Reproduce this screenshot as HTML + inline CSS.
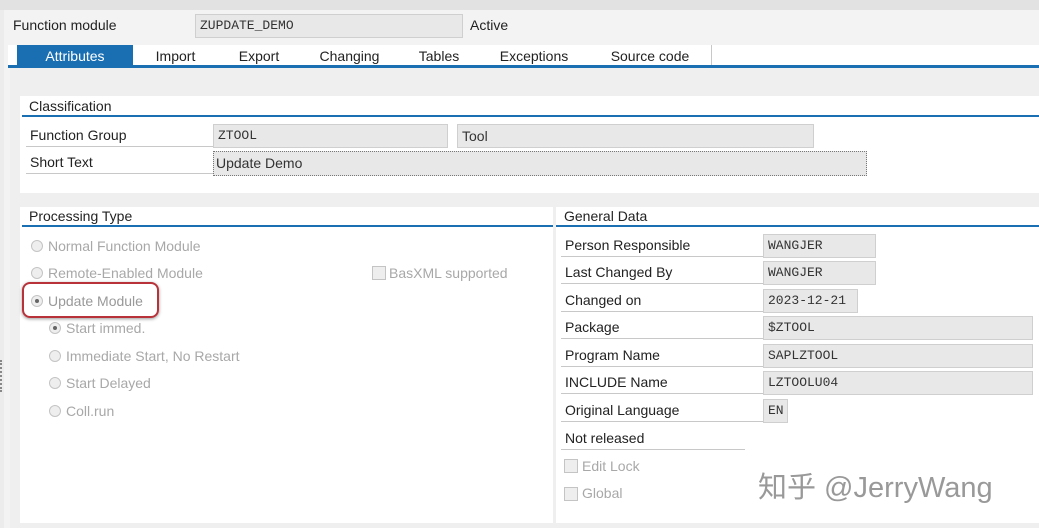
<!DOCTYPE html>
<html><head><meta charset="utf-8"><style>
body{margin:0;width:1039px;height:528px;background:#ececec;position:relative;overflow:hidden;font-family:"Liberation Sans",sans-serif;font-size:14px;color:#222}
.a{position:absolute;white-space:nowrap}
.f{position:absolute;background:#e8e8e8;border:1px solid #cfcfcf;box-sizing:border-box;font-family:"Liberation Mono",monospace;font-size:13px;padding:3px 0 0 4px;color:#333}
.tab{position:absolute;top:45px;height:21px;background:#fff;border-right:1px solid #c8c8c8;text-align:center;line-height:22px;font-size:14px}
.lbl{position:absolute;border-bottom:1px solid #c8c8c8;height:23px;line-height:23px;padding-left:4px;box-sizing:border-box}
.g{color:#a8a8a8}
.r{position:absolute;width:12px;height:12px;border-radius:50%;border:1px solid #c4c4c4;background:#eee;box-sizing:border-box}
.c{position:absolute;width:14px;height:14px;border:1px solid #c4c4c4;background:#eee;box-sizing:border-box}
</style></head><body>
<div class="a" style="left:0;top:0;width:1039px;height:10px;background:#e2e2e2"></div>
<div class="a" style="left:4px;top:10px;width:1035px;height:518px;background:#f3f3f3"></div>
<div class="a" style="left:13px;top:17px">Function module</div>
<div class="f" style="left:195px;top:14px;width:268px;height:24px">ZUPDATE_DEMO</div>
<div class="a" style="left:470px;top:17px">Active</div>
<div class="a" style="left:8px;top:45px;width:1031px;height:21px;background:#fff"></div>
<div class="tab" style="left:17px;width:116px;background:#1a6fb3;color:#fff">Attributes</div>
<div class="tab" style="left:133px;width:85px">Import</div>
<div class="tab" style="left:218px;width:82px">Export</div>
<div class="tab" style="left:300px;width:99px">Changing</div>
<div class="tab" style="left:399px;width:80px">Tables</div>
<div class="tab" style="left:479px;width:110px">Exceptions</div>
<div class="tab" style="left:589px;width:122px">Source code</div>
<div class="a" style="left:8px;top:65px;width:1031px;height:3px;background:#1a6fb3"></div>
<div class="a" style="left:10px;top:68px;width:1029px;height:460px;background:#efefef"></div>
<!-- classification -->
<div class="a" style="left:20px;top:96px;width:1019px;height:97px;background:#fff"></div>
<div class="a" style="left:29px;top:98px">Classification</div>
<div class="a" style="left:22px;top:115px;width:1017px;height:2px;background:#1a6fb3"></div>
<div class="lbl" style="left:26px;top:124px;width:188px">Function Group</div>
<div class="f" style="left:213px;top:124px;width:235px;height:24px">ZTOOL</div>
<div class="f" style="left:457px;top:124px;width:357px;height:24px;font-family:'Liberation Sans';font-size:14px">Tool</div>
<div class="lbl" style="left:26px;top:151px;width:188px">Short Text</div>
<div class="f" style="left:213px;top:151px;width:654px;height:25px;border:1px dotted #777;font-family:'Liberation Sans';font-size:14px;padding-left:2px">Update Demo</div>
<!-- processing -->
<div class="a" style="left:20px;top:207px;width:533px;height:316px;background:#fff"></div>
<div class="a" style="left:29px;top:208px">Processing Type</div>
<div class="a" style="left:22px;top:225px;width:531px;height:2px;background:#1a6fb3"></div>
<div class="r" style="left:31px;top:240px"></div><div class="a g" style="left:48px;top:238px">Normal Function Module</div>
<div class="r" style="left:31px;top:267px"></div><div class="a g" style="left:48px;top:265px">Remote-Enabled Module</div>
<div class="c" style="left:372px;top:266px"></div><div class="a g" style="left:389px;top:265px">BasXML supported</div>
<div class="a" style="left:22px;top:282px;width:133px;height:32px;border:2px solid #b8323a;border-radius:8px;box-shadow:0 1px 3px #999"></div>
<div class="r" style="left:31px;top:295px"></div><div class="a" style="left:35px;top:299px;width:4px;height:4px;border-radius:50%;background:#666"></div><div class="a g" style="left:48px;top:293px;color:#999">Update Module</div>
<div class="r" style="left:49px;top:322px"></div><div class="a" style="left:53px;top:326px;width:4px;height:4px;border-radius:50%;background:#666"></div><div class="a g" style="left:66px;top:320px">Start immed.</div>
<div class="r" style="left:49px;top:350px"></div><div class="a g" style="left:66px;top:348px">Immediate Start, No Restart</div>
<div class="r" style="left:49px;top:377px"></div><div class="a g" style="left:66px;top:375px">Start Delayed</div>
<div class="r" style="left:49px;top:405px"></div><div class="a g" style="left:66px;top:403px">Coll.run</div>
<!-- general -->
<div class="a" style="left:556px;top:207px;width:483px;height:316px;background:#fff"></div>
<div class="a" style="left:564px;top:208px">General Data</div>
<div class="a" style="left:556px;top:225px;width:483px;height:2px;background:#1a6fb3"></div>
<div class="lbl" style="left:561px;top:234px;width:203px">Person Responsible</div><div class="f" style="left:763px;top:234px;width:113px;height:24px">WANGJER</div>
<div class="lbl" style="left:561px;top:261px;width:203px">Last Changed By</div><div class="f" style="left:763px;top:261px;width:113px;height:24px">WANGJER</div>
<div class="lbl" style="left:561px;top:289px;width:203px">Changed on</div><div class="f" style="left:763px;top:289px;width:95px;height:24px">2023-12-21</div>
<div class="lbl" style="left:561px;top:316px;width:203px">Package</div><div class="f" style="left:763px;top:316px;width:270px;height:24px">$ZTOOL</div>
<div class="lbl" style="left:561px;top:344px;width:203px">Program Name</div><div class="f" style="left:763px;top:344px;width:270px;height:24px">SAPLZTOOL</div>
<div class="lbl" style="left:561px;top:371px;width:203px">INCLUDE Name</div><div class="f" style="left:763px;top:371px;width:270px;height:24px">LZTOOLU04</div>
<div class="lbl" style="left:561px;top:399px;width:203px">Original Language</div><div class="f" style="left:763px;top:399px;width:25px;height:24px">EN</div>
<div class="lbl" style="left:561px;top:427px;width:184px">Not released</div>
<div class="c" style="left:564px;top:459px"></div><div class="a g" style="left:582px;top:458px">Edit Lock</div>
<div class="c" style="left:564px;top:487px"></div><div class="a g" style="left:582px;top:485px">Global</div>
<div class="a" style="left:758px;top:464px;font-size:29px;color:#999;text-shadow:0 0 2px #fff,0 0 2px #fff;font-family:'Liberation Sans','Noto Sans CJK SC',sans-serif">知乎 @JerryWang</div>
<div class="a" style="left:0;top:360px;width:4px;height:32px;border-left:2px dotted #888"></div>
</body></html>
